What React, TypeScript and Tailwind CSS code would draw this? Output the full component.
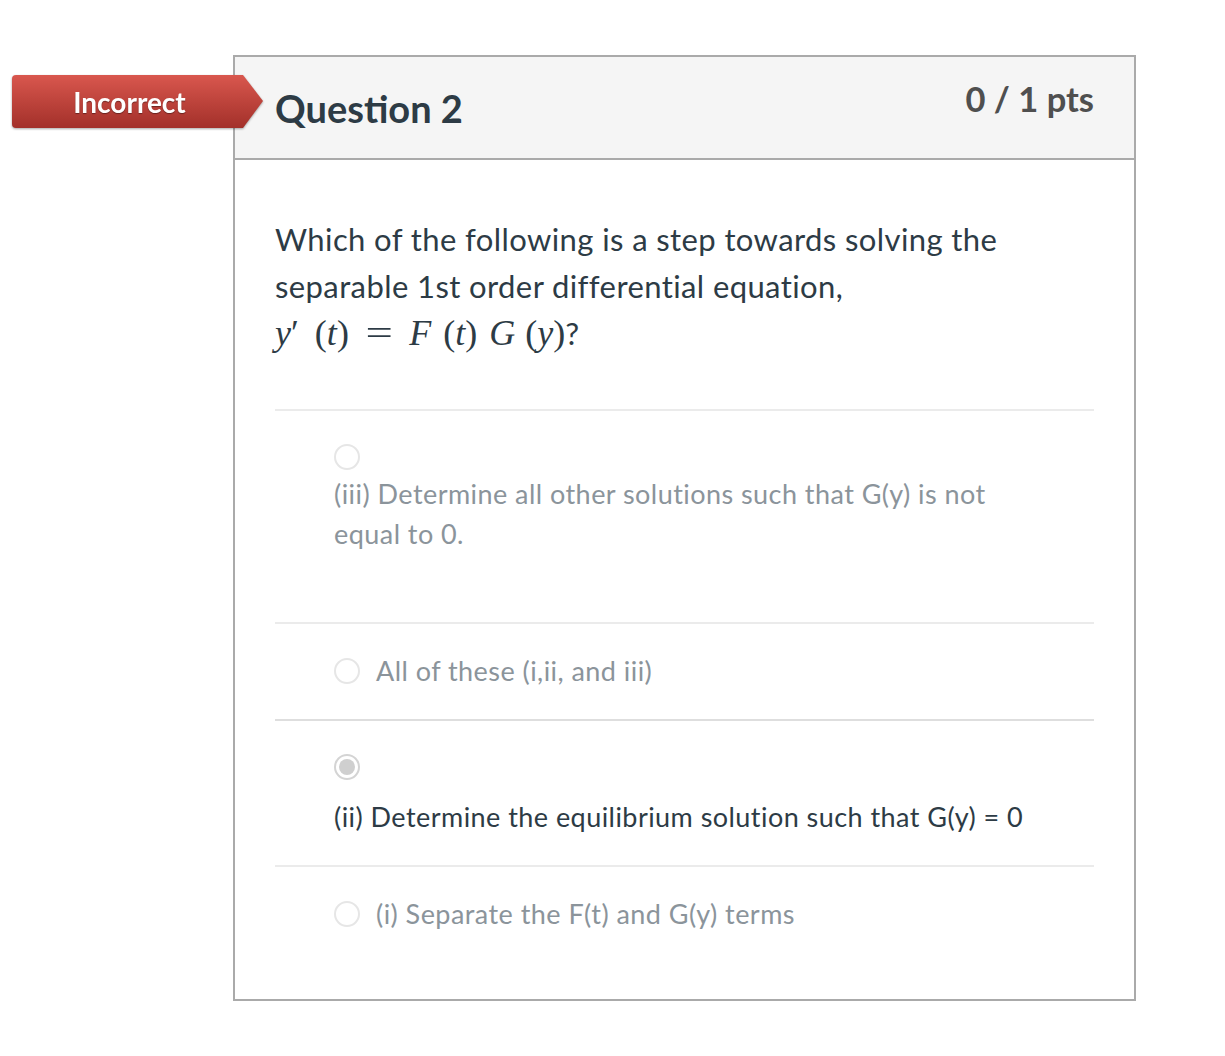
import * as React from 'react'

interface Answer {
  id: string
  text: string
  selected?: boolean
  stacked?: boolean
}

const answers: Answer[] = [
  { id: 'a1', text: '(iii) Determine all other solutions such that G(y) is not equal to 0.', stacked: true },
  { id: 'a2', text: 'All of these (i,ii, and iii)' },
  { id: 'a3', text: '(ii) Determine the equilibrium solution such that G(y) = 0', selected: true, stacked: true },
  { id: 'a4', text: '(i) Separate the F(t) and G(y) terms' },
]

function Radio({ selected }: { selected?: boolean }) {
  return (
    <span
      className={
        selected
          ? 'flex h-[26px] w-[26px] shrink-0 items-center justify-center rounded-full border-2 border-[#d4d4d4] bg-white'
          : 'flex h-[26px] w-[26px] shrink-0 items-center justify-center rounded-full border-2 border-[#e6e6e6] bg-white'
      }
    >
      {selected && <span className="h-[16px] w-[16px] rounded-full bg-[#cfcfcf]" />}
    </span>
  )
}

function AnswerRow({ answer, last }: { answer: Answer; last: boolean }) {
  const textColor = answer.selected ? 'text-[#2d3b45]' : 'text-[#8b949b]'
  if (answer.stacked) {
    return (
      <div
        className={
          answer.selected
            ? 'border-b-2 border-[#ebebeb] pb-[28px] pl-[59px] pt-[33px]'
            : 'border-b-2 border-[#ebebeb] pb-[68px] pl-[59px] pt-[33px]'
        }
      >
        <Radio selected={answer.selected} />
        <p
          className={
            answer.selected
              ? `mt-[17px] max-w-[700px] text-[27px] leading-[40px] tracking-[0.45px] ${textColor}`
              : `mt-[4px] max-w-[700px] text-[27px] leading-[40px] tracking-[0.45px] ${textColor}`
          }
        >
          {answer.text}
        </p>
      </div>
    )
  }
  return (
    <div
      className={
        last
          ? 'flex items-center gap-[16px] pb-[65px] pl-[59px] pt-[27px]'
          : 'flex items-center gap-[16px] border-b-2 border-[#dedede] pb-[28px] pl-[59px] pt-[27px]'
      }
    >
      <Radio selected={answer.selected} />
      <span className={`text-[27px] leading-[40px] tracking-[0.45px] ${textColor}`}>{answer.text}</span>
    </div>
  )
}

export default function App() {
  return (
    <div className="min-h-[1056px] bg-white pt-[55px] font-['Lato','Noto_Sans',sans-serif]">
      <div className="relative ml-[233px] w-[903px] border-2 border-[#aaaaaa] bg-white">
        {/* result badge */}
        <div className="absolute left-[-223px] top-[18px] h-[53px] w-[251px] drop-shadow-[0_1px_1px_rgba(0,0,0,0.35)]">
          <div className="flex h-full w-full items-center rounded-l-[4px] bg-gradient-to-b from-[#d9574e] to-[#a3302a] [clip-path:polygon(0_0,231px_0,251px_26px,231px_53px,0_53px)]">
            <span className="w-[235px] text-center text-[28px] font-bold leading-[50px] text-white [text-shadow:0_1px_1px_rgba(0,0,0,0.4)]">
              Incorrect
            </span>
          </div>
        </div>

        <div className="flex items-start justify-between border-b-2 border-[#aaaaaa] bg-[#f5f5f5] px-[40px] pb-[25px] pt-[26px]">
          <h2 className="text-[38px] font-bold leading-[50px] text-[#2d3b45]">Question 2</h2>
          <div className="mt-[-4px] text-[34.5px] font-bold leading-[40px] text-[#4f4f4f]">0 / 1 pts</div>
        </div>

        <div className="px-[40px] pb-0 pt-[56px]">
          <div className="pb-[52px] text-[31px] leading-[47px] tracking-[0.4px] text-[#2d3b45]">
            <p>Which of the following is a step towards solving the</p>
            <p>separable 1st order differential equation,</p>
            <p className="flex items-baseline">
              <span className="font-['Liberation_Serif','DejaVu_Serif',serif] text-[36px] italic tracking-normal">
                y
                <span className="not-italic">&#8242;</span>
                <span className="ml-[16px] not-italic">(</span>t<span className="not-italic">)</span>
                <span className="mx-[20px] inline-block scale-x-[1.35] not-italic">=</span>
                F<span className="ml-[12px] not-italic">(</span>t<span className="not-italic">)</span>
                <span className="ml-[12px]">G</span>
                <span className="ml-[10px] not-italic">(</span>y<span className="not-italic">)</span>
              </span>
              <span>?</span>
            </p>
          </div>

          <div className="border-t-2 border-[#ebebeb]">
            {answers.map((a, i) => (
              <AnswerRow key={a.id} answer={a} last={i === answers.length - 1} />
            ))}
          </div>
        </div>
      </div>
    </div>
  )
}
